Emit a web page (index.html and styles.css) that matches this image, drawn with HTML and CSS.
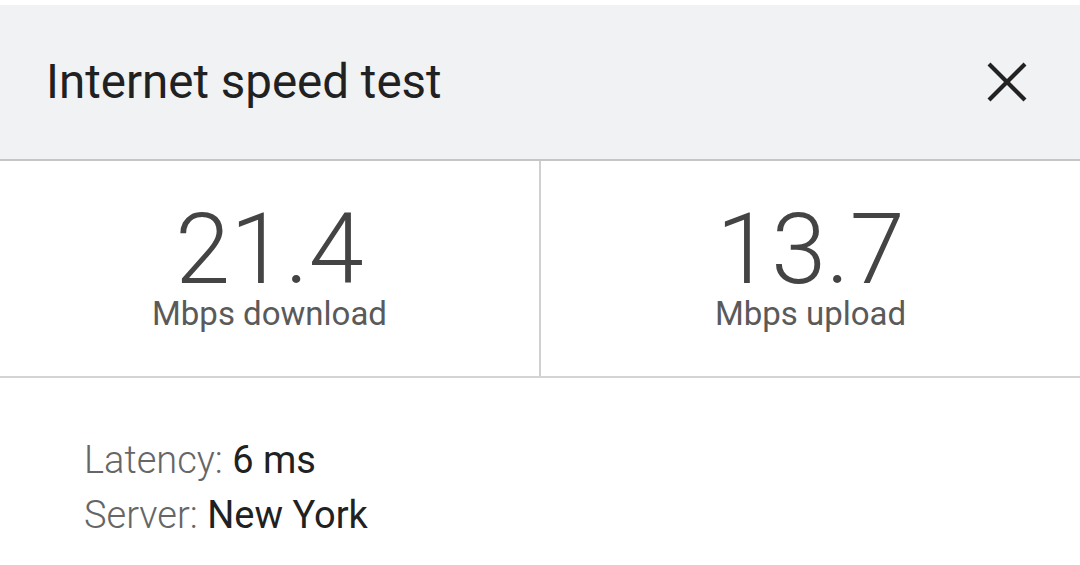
FILE: index.html
```html
<!DOCTYPE html>
<html>
<head>
<meta charset="utf-8">
<link rel="stylesheet" href="styles.css">
</head>
<body>
<div class="dialog">
  <header class="header">
    <h1 class="title">Internet speed test</h1>
    <button class="close" aria-label="Close">
      <svg width="40" height="40" viewBox="0 0 40 40"><path d="M2 2L38 38M38 2L2 38" stroke="#222" stroke-width="4.2" stroke-linecap="butt"/></svg>
    </button>
  </header>
  <section class="stats">
    <div class="stat">
      <div class="value">21.4</div>
      <div class="unit">Mbps download</div>
    </div>
    <div class="stat">
      <div class="value">13.7</div>
      <div class="unit">Mbps upload</div>
    </div>
  </section>
  <section class="info">
    <div class="row"><span class="label">Latency:</span> <span class="val">6 ms</span></div>
    <div class="row"><span class="label">Server:</span> <span class="val">New York</span></div>
  </section>
</div>
</body>
</html>
```
FILE: styles.css
```css
html, body {
  margin: 0;
  padding: 0;
  background: #ffffff;
  font-family: Roboto, "Noto Sans", sans-serif;
}
.dialog {
  width: 1080px;
  height: 565px;
  padding-top: 5px;
  box-sizing: border-box;
  overflow: hidden;
}
.header {
  height: 156px;
  background: #f1f2f4;
  border-bottom: 2px solid #c6c6c6;
  display: flex;
  align-items: center;
  justify-content: space-between;
  padding: 0 53px 0 46px;
  box-sizing: border-box;
}
.title {
  margin: 0;
  font-size: 47.5px;
  font-weight: 400;
  color: #212121;
}
.close {
  border: 0;
  background: transparent;
  padding: 0;
  width: 40px;
  height: 40px;
  display: flex;
}
.stats {
  display: flex;
  height: 217px;
  border-bottom: 2px solid #d4d4d4;
  box-sizing: border-box;
}
.stat {
  flex: 1;
  display: flex;
  flex-direction: column;
  align-items: center;
  padding-top: 41px;
}
.stat + .stat {
  border-left: 2px solid #d0d0d0;
}
.value {
  font-size: 99px;
  font-weight: 300;
  color: #444444;
  line-height: 94px;
}
.unit {
  font-size: 33px;
  color: #5a5a5a;
  line-height: 36px;
  margin-top: 0;
}
.info {
  padding: 55px 0 0 84px;
}
.row {
  font-size: 38px;
  line-height: 55px;
  color: #212121;
}
.label {
  font-weight: 300;
  color: #666666;
}
```
